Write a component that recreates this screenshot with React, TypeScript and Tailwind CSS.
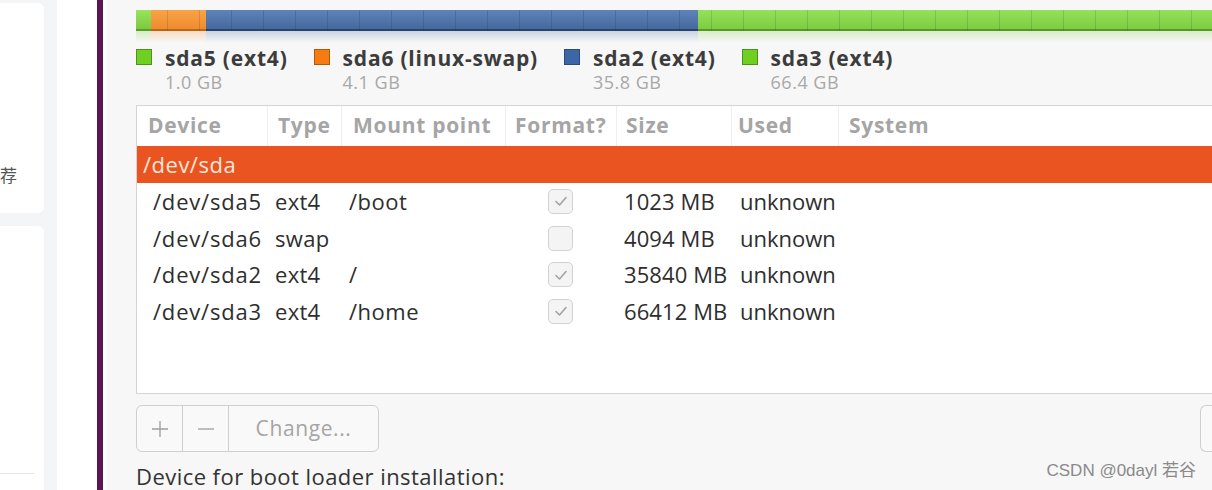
import React from "react";

const font = { fontFamily: '"Open Sans", "Noto Sans", "Noto Sans CJK SC", sans-serif' };

type Row = { dev: string; type: string; mount: string; fmt: boolean; size: string; used: string };
const rows: Row[] = [
  { dev: "/dev/sda5", type: "ext4", mount: "/boot", fmt: true, size: "1023 MB", used: "unknown" },
  { dev: "/dev/sda6", type: "swap", mount: "", fmt: false, size: "4094 MB", used: "unknown" },
  { dev: "/dev/sda2", type: "ext4", mount: "/", fmt: true, size: "35840 MB", used: "unknown" },
  { dev: "/dev/sda3", type: "ext4", mount: "/home", fmt: true, size: "66412 MB", used: "unknown" },
];

function Check({ on }: { on: boolean }) {
  return (
    <div className="w-[25px] h-[25px] rounded-[5px] border border-[#d2d2d2] bg-[#f4f4f4] flex items-center justify-center">
      {on && (
        <svg width="16" height="16" viewBox="0 0 16 16">
          <path d="M3 8.5 L6.5 12 L13 4.5" fill="none" stroke="#a3a3a3" strokeWidth="1.6" strokeLinecap="round" strokeLinejoin="round" />
        </svg>
      )}
    </div>
  );
}

function Legend({ sw, border, name, size }: { sw: string; border: string; name: string; size: string }) {
  return (
    <div className="flex items-start gap-[13px]">
      <div className={`w-[16px] h-[16px] mt-[3px] border ${sw} ${border}`} />
      <div className="flex flex-col">
        <span className="text-[21px] leading-[24px] font-bold tracking-[0.8px] text-[#3c3c3c]">{name}</span>
        <span className="text-[18px] leading-[24px] tracking-[0.5px] text-[#a8a8a8]">{size}</span>
      </div>
    </div>
  );
}

export default function App() {
  return (
    <div className="w-[1212px] h-[490px] flex overflow-hidden bg-[#f4f5f7]" style={font}>
      {/* left sidebar fragments */}
      <div className="w-[44px] flex flex-col shrink-0">
        <div className="mt-[3px] h-[210px] shrink-0 bg-white rounded-r-[6px] flex items-center">
          <span className="text-[17px] text-[#555] mt-[136px]">荐</span>
        </div>
        <div className="mt-[13px] flex-1 bg-white rounded-tr-[6px] flex flex-col justify-end pb-[16px]">
          <div className="h-px w-[34px] bg-[#e6e6e6]" />
        </div>
      </div>
      <div className="w-[13px] shrink-0" />
      <div className="w-[40px] shrink-0 bg-white" />
      <div className="w-[6px] shrink-0 bg-[#5a1552]" />
      <div className="w-[3px] shrink-0 bg-white" />

      {/* installer panel */}
      <div className="flex-1 bg-[#f7f7f7] pl-[30px] flex flex-col min-w-0">
        {/* partition bar */}
        <div className="relative mt-[10px] flex shrink-0">
          <div className="w-[15px] flex flex-col">
            <div className="h-[21px] bg-gradient-to-b from-[#9ae35c] to-[#7cc93e] border-b-2 border-[#5e9a2c]" />
            <div className="h-[12px] bg-gradient-to-b from-[#7cc93e]/25 to-transparent" />
          </div>
          <div className="w-[55px] flex flex-col">
            <div className="h-[21px] bg-gradient-to-b from-[#f8a348] to-[#ee8c2c] border-b-2 border-[#b96718]" />
            <div className="h-[12px] bg-gradient-to-b from-[#ee8c2c]/25 to-transparent" />
          </div>
          <div className="w-[492px] flex flex-col">
            <div className="h-[21px] bg-gradient-to-b from-[#5d84ba] to-[#46699c] border-b-2 border-[#28446c]" />
            <div className="h-[12px] bg-gradient-to-b from-[#46699c]/25 to-transparent" />
          </div>
          <div className="flex-1 flex flex-col">
            <div className="h-[21px] bg-gradient-to-b from-[#95e05a] to-[#7ccd40] border-b-2 border-[#5a962b]" />
            <div className="h-[12px] bg-gradient-to-b from-[#7ccd40]/25 to-transparent" />
          </div>
          <div className="absolute left-0 right-0 top-0 h-[21px] bg-[repeating-linear-gradient(90deg,transparent_0px,transparent_31px,rgba(0,0,0,0.12)_31px,rgba(0,0,0,0.12)_32px)]" />
        </div>

        {/* legend */}
        <div className="mt-[3px] flex gap-[26px] shrink-0">
          <Legend sw="bg-[#6fd022]" border="border-[#4c9417]" name="sda5 (ext4)" size="1.0 GB" />
          <Legend sw="bg-[#f47c12]" border="border-[#b35900]" name="sda6 (linux-swap)" size="4.1 GB" />
          <Legend sw="bg-[#3b67a6]" border="border-[#2a4c7e]" name="sda2 (ext4)" size="35.8 GB" />
          <Legend sw="bg-[#6fd022]" border="border-[#4c9417]" name="sda3 (ext4)" size="66.4 GB" />
        </div>

        {/* table */}
        <div className="mt-[11px] h-[289px] shrink-0 bg-white border border-r-0 border-[#d4d4d4] flex flex-col">
          <div className="h-[40px] shrink-0 flex text-[21px] font-bold tracking-[0.7px] text-[#a5a5a5]">
            <div className="w-[131px] pl-[11px] flex items-center border-r border-[#eeeeee]">Device</div>
            <div className="w-[74px] pl-[10px] flex items-center border-r border-[#eeeeee]">Type</div>
            <div className="w-[164px] pl-[11px] flex items-center border-r border-[#eeeeee]">Mount point</div>
            <div className="w-[111px] pl-[9px] flex items-center border-r border-[#eeeeee]">Format?</div>
            <div className="w-[115px] pl-[9px] flex items-center border-r border-[#eeeeee]">Size</div>
            <div className="w-[107px] pl-[6px] flex items-center border-r border-[#eeeeee]">Used</div>
            <div className="flex-1 pl-[10px] flex items-center">System</div>
          </div>
          <div className="h-[37px] shrink-0 bg-[#e95420] flex items-center pl-[6px] text-[22px] tracking-[0.5px] text-[#fde6da]">/dev/sda</div>
          <div className="flex flex-col shrink-0">
            {rows.map((r) => (
              <div key={r.dev} className="h-[36.7px] shrink-0 flex items-center text-[22px] text-[#2e2e2e]">
                <div className="w-[138px] pl-[16px] tracking-[0.8px]">{r.dev}</div>
                <div className="w-[74px] tracking-[0.3px]">{r.type}</div>
                <div className="w-[199px] tracking-[0.5px]">{r.mount}</div>
                <div className="w-[76px]"><Check on={r.fmt} /></div>
                <div className="w-[116px] tracking-[0.1px]">{r.size}</div>
                <div>{r.used}</div>
              </div>
            ))}
          </div>
        </div>

        {/* buttons */}
        <div className="mt-[11px] flex items-center justify-between shrink-0">
          <div className="flex h-[47px] border border-[#cfcfcf] rounded-[6px] bg-[#f9f9f9] text-[#a5a5a5]">
            <div className="w-[46px] flex items-center justify-center border-r border-[#cfcfcf]">
              <svg width="18" height="18" viewBox="0 0 18 18"><path d="M9 1 V17 M1 9 H17" stroke="#9d9d9d" strokeWidth="1.3" /></svg>
            </div>
            <div className="w-[46px] flex items-center justify-center border-r border-[#cfcfcf]">
              <svg width="18" height="18" viewBox="0 0 18 18"><path d="M1 9 H17" stroke="#9d9d9d" strokeWidth="1.3" /></svg>
            </div>
            <div className="w-[149px] flex items-center justify-center text-[21px] tracking-[0.6px]">Change...</div>
          </div>
          <div className="w-[12px] h-[47px] border border-r-0 border-[#cfcfcf] rounded-l-[6px] bg-[#f9f9f9]" />
        </div>

        <div className="mt-[8px] flex items-center justify-between pr-[16px] shrink-0">
          <span className="text-[22px] tracking-[0.45px] text-[#333]">Device for boot loader installation:</span>
          <span className="text-[17px] text-[#8a8a8a] mt-[-12px]" style={{ fontFamily: '"Liberation Sans", "Noto Sans CJK SC", sans-serif' }}>CSDN @0dayl 若谷</span>
        </div>
      </div>
    </div>
  );
}
